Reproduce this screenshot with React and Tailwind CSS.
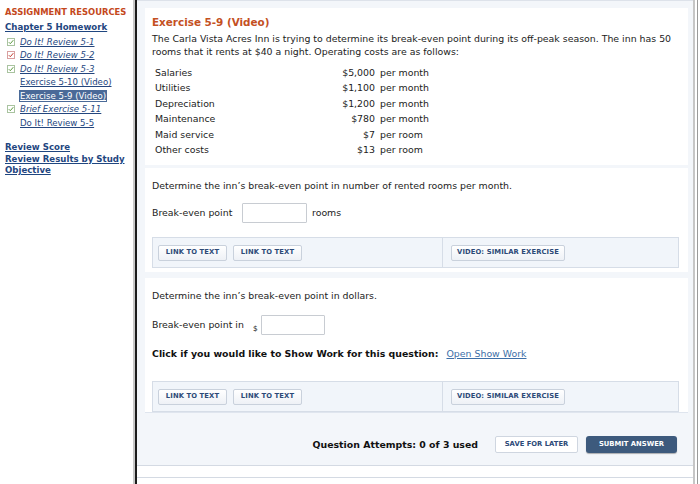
import React from 'react';

const font = { fontFamily: '"DejaVu Sans", Verdana, sans-serif' };

const costs = [
  ['Salaries', '$5,000', 'per month'],
  ['Utilities', '$1,100', 'per month'],
  ['Depreciation', '$1,200', 'per month'],
  ['Maintenance', '$780', 'per month'],
  ['Maid service', '$7', 'per room'],
  ['Other costs', '$13', 'per room'],
];

const navItems = [
  { label: 'Do It! Review 5-1', mark: 'ok' },
  { label: 'Do It! Review 5-2', mark: 'bad' },
  { label: 'Do It! Review 5-3', mark: 'ok' },
  { label: 'Exercise 5-10 (Video)' },
  { label: 'Exercise 5-9 (Video)', active: true },
  { label: 'Brief Exercise 5-11', mark: 'ok' },
  { label: 'Do It! Review 5-5' },
];

const CheckMark = ({ bad }) => (
  <svg width="8" height="8" viewBox="0 0 8 8" className="shrink-0">
    <rect x="0.5" y="0.5" width="7" height="7" fill="#fff" stroke={bad ? '#d9a0a0' : '#a9c3a0'} />
    <path d="M1.8 4.2 L3.3 5.7 L6.3 2.2" fill="none" stroke={bad ? '#c0392b' : '#5a9a3c'} strokeWidth="1" />
  </svg>
);

const SmallBtn = ({ children, w }) => (
  <button
    className={
      'h-[16px] rounded-[2px] border border-[#c9d1dc] bg-gradient-to-b from-white to-[#eef1f6] text-[6.8px] font-bold text-[#2d4a78] tracking-[0.1px] leading-none ' +
      w
    }
  >
    {children}
  </button>
);

const LinkBar = () => (
  <div className="flex h-[31px] border border-[#d6dde7] bg-[#f1f5fa]">
    <div className="w-[290px] flex items-center gap-[6px] pl-[5px] border-r border-[#d6dde7]">
      <SmallBtn w="w-[69px]">LINK TO TEXT</SmallBtn>
      <SmallBtn w="w-[69px]">LINK TO TEXT</SmallBtn>
    </div>
    <div className="flex items-center pl-[8px]">
      <SmallBtn w="w-[114px]">VIDEO: SIMILAR EXERCISE</SmallBtn>
    </div>
  </div>
);

const Sidebar = () => (
  <aside className="w-[133px] shrink-0 bg-white pl-[5px] pt-[6px] text-[8.6px]">
    <div className="text-[#c4481c] font-bold text-[8.4px] leading-[12px]">ASSIGNMENT RESOURCES</div>
    <div className="mt-[3px] text-[#1f4680] font-bold underline leading-[12px]">Chapter 5 Homework</div>
    <ul className="mt-[2px] flex flex-col">
      {navItems.map((it) => (
        <li key={it.label} className="flex items-center h-[13.5px]">
          <span className="w-[14px] pl-[2px] flex items-center">
            {it.mark && <CheckMark bad={it.mark === 'bad'} />}
          </span>
          <span
            className={
              'underline leading-[12px] px-[1px] ' +
              (it.active ? 'bg-[#4a6a98] text-white' : 'text-[#24467e]') +
              (it.mark ? ' italic' : '')
            }
          >
            {it.label}
          </span>
        </li>
      ))}
    </ul>
    <div className="mt-[11px] text-[#1f4680] font-bold underline leading-[12px]">Review Score</div>
    <div className="mt-[1px] text-[#1f4680] font-bold underline leading-[11px] w-[125px]">
      Review Results by Study Objective
    </div>
  </aside>
);

export default function App() {
  return (
    <div className="w-[700px] h-[484px] flex bg-white overflow-hidden text-[#222]" style={font}>
      <Sidebar />
      <div className="w-[2px] bg-[#c8c8c8] shrink-0" />
      <div className="w-[2px] bg-[#1c1c1c] shrink-0" />
      <main className="w-[556px] shrink-0 flex flex-col bg-[#f3f6fa] text-[9.4px] border-t border-[#dde2ea]">
        {/* Question text */}
        <section className="ml-[8px] mr-[5px] mt-[7px] h-[157px] bg-white px-[7px] pt-[7px]">
          <h1 className="text-[#c4501f] font-bold text-[10.4px] leading-[14px]">Exercise 5-9 (Video)</h1>
          <p className="mt-[3px] leading-[13px]">
            The Carla Vista Acres Inn is trying to determine its break-even point during its off-peak season. The inn has 50
            rooms that it rents at $40 a night. Operating costs are as follows:
          </p>
          <div className="mt-[7px] ml-[3px] grid grid-cols-[144px_71px_auto] gap-x-[5px] leading-[15.4px]">
            {costs.map(([a, b, c]) => (
              <React.Fragment key={a}>
                <span>{a}</span>
                <span className="text-right">{b}</span>
                <span>{c}</span>
              </React.Fragment>
            ))}
          </div>
        </section>

        {/* Part 1 */}
        <section className="ml-[8px] mr-[5px] mt-[3px] h-[104px] bg-white pl-[7px] pr-[9px] pt-[11px]">
          <p className="leading-[13px]">Determine the inn’s break-even point in number of rented rooms per month.</p>
          <div className="mt-[11px] flex items-center h-[20px]">
            <span className="w-[90px]">Break-even point</span>
            <input className="w-[65px] h-[20px] border border-[#c8ccd2] bg-white rounded-[1px]" />
            <span className="ml-[5px]">rooms</span>
          </div>
          <div className="mt-[14px]">
            <LinkBar />
          </div>
        </section>

        {/* Part 2 */}
        <section className="ml-[8px] mr-[5px] mt-[6px] h-[135px] bg-white pl-[7px] pr-[9px] pt-[11px] border-b border-[#dfe5ee]">
          <p className="leading-[13px]">Determine the inn’s break-even point in dollars.</p>
          <div className="mt-[13px] flex items-center h-[20px]">
            <span className="w-[101px]">Break-even point in</span>
            <span className="text-[7.5px] mt-[8px] w-[8px]">$</span>
            <input className="w-[64px] h-[20px] border border-[#c8ccd2] bg-white rounded-[1px]" />
          </div>
          <div className="mt-[12px] flex items-center">
            <span className="font-bold text-[#111]">Click if you would like to Show Work for this question:</span>
            <span className="ml-[8px] underline text-[#3d6fa8]">Open Show Work</span>
          </div>
          <div className="mt-[20px]">
            <LinkBar />
          </div>
        </section>

        {/* Submit row */}
        <div className="h-[52px] flex items-start justify-end pr-[16px] pt-[23px] gap-[8px]">
          <span className="font-bold text-[#111] mr-[9px] mt-[2px]">Question Attempts: 0 of 3 used</span>
          <button className="h-[17px] w-[83px] rounded-[2px] border border-[#cfd6e0] bg-white text-[6.8px] font-bold text-[#2d4a78]">
            SAVE FOR LATER
          </button>
          <button className="h-[17px] w-[91px] rounded-[3px] bg-[#3d5a7d] text-[6.8px] font-bold text-white shadow-[0_1px_1px_rgba(0,0,0,0.3)]">
            SUBMIT ANSWER
          </button>
        </div>
        <div className="h-[12px] bg-white border-t border-[#d4dae3]" />
        <div className="flex-1 bg-white border-t border-[#d4dae3]" />
      </main>
      <div className="w-[2px] bg-[#c6c6c6] shrink-0" />
      <div className="w-[2px] bg-white shrink-0" />
      <div className="w-[1px] bg-[#9a9a9a] shrink-0" />
      <div className="flex-1 bg-white" />
    </div>
  );
}
